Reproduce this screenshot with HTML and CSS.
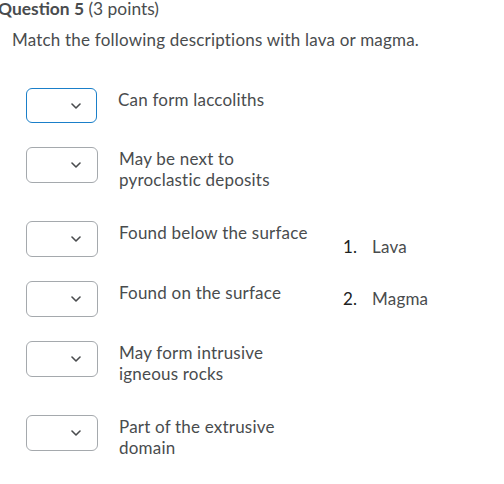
FILE: index.html
```html
<!DOCTYPE html>
<html lang="en">
<head>
<meta charset="utf-8">
<title>Question 5</title>
<link rel="stylesheet" href="styles.css">
</head>
<body>
<div class="page">
  <h2 class="q-title"><strong>Question 5</strong> (3 points)</h2>
  <p class="prompt">Match the following descriptions with lava or magma.</p>
  <div class="match">
    <div class="items">
      <div class="row">
        <div class="select focused"><svg class="chev" width="10" height="6" viewBox="0 0 10 6"><path d="M1 1l4 4 4-4"/></svg></div>
        <div class="desc">Can form laccoliths</div>
      </div>
      <div class="row">
        <div class="select"><svg class="chev" width="10" height="6" viewBox="0 0 10 6"><path d="M1 1l4 4 4-4"/></svg></div>
        <div class="desc">May be next to pyroclastic deposits</div>
      </div>
      <div class="row">
        <div class="select"><svg class="chev" width="10" height="6" viewBox="0 0 10 6"><path d="M1 1l4 4 4-4"/></svg></div>
        <div class="desc">Found below the surface</div>
      </div>
      <div class="row">
        <div class="select"><svg class="chev" width="10" height="6" viewBox="0 0 10 6"><path d="M1 1l4 4 4-4"/></svg></div>
        <div class="desc">Found on the surface</div>
      </div>
      <div class="row">
        <div class="select"><svg class="chev" width="10" height="6" viewBox="0 0 10 6"><path d="M1 1l4 4 4-4"/></svg></div>
        <div class="desc">May form intrusive igneous rocks</div>
      </div>
      <div class="row">
        <div class="select"><svg class="chev" width="10" height="6" viewBox="0 0 10 6"><path d="M1 1l4 4 4-4"/></svg></div>
        <div class="desc">Part of the extrusive domain</div>
      </div>
    </div>
    <ol class="choices">
      <li><span class="num">1.</span><span class="label">Lava</span></li>
      <li><span class="num">2.</span><span class="label">Magma</span></li>
    </ol>
  </div>
</div>
</body>
</html>
```

FILE: styles.css
```css
html, body {
  margin: 0;
  padding: 0;
  background: #ffffff;
}

body {
  font-family: Lato, "Noto Sans", "Liberation Sans", sans-serif;
  color: #494c4e;
  font-size: 17px;
  line-height: 21px;
  letter-spacing: 0.2px;
}

.q-title {
  margin: 0 0 0 -2px;
  font-size: 17.4px;
  line-height: 18px;
  font-weight: 400;
  letter-spacing: 0;
  color: #494c4e;
}

.q-title strong {
  font-weight: 700;
}

.prompt {
  margin: 11px 0 0 12px;
  line-height: 21px;
}

.match {
  display: flex;
  margin-top: 38px;
  padding-left: 26px;
}

.items {
  display: flex;
  flex-direction: column;
  gap: 24px;
}

.row {
  display: flex;
  align-items: flex-start;
  gap: 21px;
}

.select {
  box-sizing: border-box;
  width: 72px;
  height: 36px;
  border: 1px solid #a5a9ad;
  border-radius: 6px;
  display: flex;
  align-items: center;
  justify-content: flex-end;
  padding-right: 16px;
  flex-shrink: 0;
}

.select.focused {
  border-color: #1a7fc9;
  height: 35px;
  width: 71px;
  padding-right: 15px;
}

.chev path {
  fill: none;
  stroke: #494c4e;
  stroke-width: 1.6;
  stroke-linecap: round;
  stroke-linejoin: round;
}

.desc {
  width: 196px;
  padding-top: 1px;
  padding-bottom: 7px;
}

.choices {
  list-style: none;
  margin: -8px 0 0 28px;
  padding: 0;
  align-self: center;
  display: flex;
  flex-direction: column;
  gap: 31px;
}

.choices li {
  display: flex;
}

.num {
  width: 29px;
  color: #202122;
}

.label {
  color: #494c4e;
}
```
